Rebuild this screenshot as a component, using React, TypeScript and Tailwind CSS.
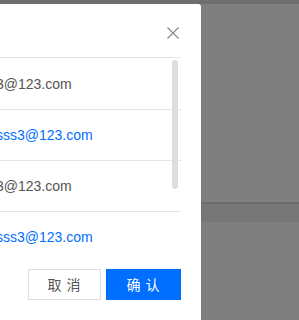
import React from 'react';

const emails = [
  { text: '3@123.com', active: false },
  { text: 'sss3@123.com', active: true },
  { text: '3@123.com', active: false },
  { text: 'sss3@123.com', active: true },
  { text: '3@123.com', active: false },
];

export default function App() {
  return (
    <div
      className="relative w-[299px] h-[320px] overflow-hidden bg-[#7f7f7f]"
      style={{ fontFamily: '"Liberation Sans", "Noto Sans CJK SC", sans-serif' }}
    >
      {/* page under the mask */}
      <div className="h-[4px] bg-[#6e6e6e]" />
      <div className="h-[198px]" />
      <div className="h-[2px] bg-[#6b6b6b]" />
      <div className="h-[18px] bg-[#777777]" />

      {/* dialog */}
      <div className="absolute left-[-24px] top-[4px] w-[225px] h-[330px] bg-white rounded-tr-[3px] pl-[20px] pr-[20px]">
        <div className="h-[54px] border-b border-[#e5e5e5] flex justify-end">
          <button className="mt-[23px] w-[16px] h-[12px] flex items-start justify-center">
            <svg width="12" height="12" viewBox="0 0 12 12" fill="none">
              <path d="M0.5 0.5L11.5 11.5M11.5 0.5L0.5 11.5" stroke="#8a8a8a" strokeWidth="1.2" />
            </svg>
          </button>
        </div>

        <div className="relative h-[204px] overflow-hidden pt-[1px]">
          {emails.map((item, i) => (
            <div
              key={i}
              className={`h-[51px] border-b border-[#e5e5e5] flex items-center text-[14px] whitespace-nowrap ${
                item.active ? 'text-[#006eff]' : 'text-[#555555]'
              }`}
            >
              {item.text}
            </div>
          ))}
          <div className="absolute right-[3px] top-[2px] w-[6px] h-[129px] rounded-full bg-[#dddddd]" />
        </div>

        <div className="flex justify-end gap-[5px] mt-[7px]">
          <button
            className="w-[73px] h-[31px] border border-[#dcdee5] bg-white text-[14px] text-[#555555] tracking-[1px]"
            style={{ fontFamily: '"Noto Sans CJK SC", sans-serif' }}
          >
            取 消
          </button>
          <button
            className="w-[75px] h-[31px] bg-[#006eff] text-[14px] text-white tracking-[1px]"
            style={{ fontFamily: '"Noto Sans CJK SC", sans-serif' }}
          >
            确 认
          </button>
        </div>
      </div>
    </div>
  );
}
